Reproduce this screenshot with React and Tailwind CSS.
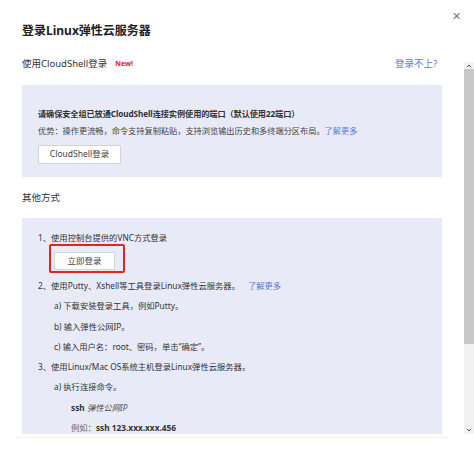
import React from "react";

const font = { fontFamily: '"Noto Sans", "Noto Sans CJK SC", sans-serif' };

const Row = ({ indent, children }) => (
  <div className={`${indent} leading-[20.3px] h-[20.3px] whitespace-nowrap`}>{children}</div>
);

const Chevron = ({ up }) => (
  <svg width="6" height="4" viewBox="0 0 6 4" className="text-[#555]">
    <path
      d={up ? "M0.8 3.2 L3 1 L5.2 3.2" : "M0.8 0.8 L3 3 L5.2 0.8"}
      fill="none"
      stroke="currentColor"
      strokeWidth="1"
    />
  </svg>
);

const App = () => {
  return (
    <div
      className="relative w-[474px] h-[474px] bg-white overflow-hidden text-[#333]"
      style={font}
    >
      {/* close */}
      <div className="absolute left-[452px] top-[10px] text-[#777] text-[11px] leading-[12px]">
        ✕
      </div>

      <div className="pl-[22px] pt-[22px] h-[54px]">
        <h1 className="text-[12px] leading-[18px] font-bold text-[#222] whitespace-nowrap">
          登录Linux弹性云服务器
        </h1>
      </div>

      <div className="flex">
        <div className="ml-[22px] w-[420px] h-[380px] overflow-hidden">
          <div className="flex items-center h-[20px] text-[9.5px]">
            <span>使用CloudShell登录</span>
            <span className="ml-[8px] text-[7px] font-bold text-[#e02020]">New!</span>
            <span className="ml-auto mr-[5px] text-[#5a78d6]">登录不上?</span>
          </div>

          <div className="mt-[11px] bg-[#e8ebf7] h-[92px] pl-[16px] pt-[20px] text-[8.2px]">
            <div className="leading-[17px] font-bold whitespace-nowrap tracking-[-0.1px]">
              请确保安全组已放通CloudShell连接实例使用的端口（默认使用22端口）
            </div>
            <div className="leading-[17px] whitespace-nowrap text-[#444]">
              优势：操作更流畅，命令支持复制粘贴，支持浏览输出历史和多终端分区布局。
              <span className="text-[#5a78d6]">了解更多</span>
            </div>
            <button className="mt-[6px] w-[83px] h-[19px] bg-white border border-[#d4d4d4] rounded-[2px] text-[8.5px] text-[#444]">
              CloudShell登录
            </button>
          </div>

          <div className="mt-[11px] h-[20px] leading-[20px] text-[9.5px]">其他方式</div>

          <div className="mt-[10px] bg-[#e8ebf7] pl-[16px] pt-[14px] text-[8.3px] text-[#333] h-[240px]">
            <div className="leading-[12px] whitespace-nowrap">1、使用控制台提供的VNC方式登录</div>
            <div className="ml-[11px] w-[76px] h-[29px] border-2 border-[#e0261c] rounded-[2px] pl-[3px] pt-[6px]">
              <button className="w-[61px] h-[18px] bg-white border border-[#d4d4d4] text-[8.5px] text-[#444]">
                立即登录
              </button>
            </div>
            <div className="mt-[3px]">
              <Row indent="">
                2、使用Putty、Xshell等工具登录Linux弹性云服务器。
                <span className="ml-[8px] text-[#5a78d6]">了解更多</span>
              </Row>
              <Row indent="pl-[16px]">a) 下载安装登录工具，例如Putty。</Row>
              <Row indent="pl-[16px]">b) 输入弹性公网IP。</Row>
              <Row indent="pl-[16px]">c) 输入用户名：root、密码，单击“确定”。</Row>
              <Row indent="">3、使用Linux/Mac OS系统主机登录Linux弹性云服务器。</Row>
              <Row indent="pl-[16px]">a) 执行连接命令。</Row>
              <Row indent="pl-[33px]">
                <span className="font-bold">ssh</span> <span className="italic text-[#555]">弹性公网IP</span>
              </Row>
              <Row indent="pl-[33px]">
                <span className="text-[#666]">例如：</span>
                <span className="font-bold">ssh 123.xxx.xxx.456</span>
              </Row>
            </div>
          </div>
        </div>

        {/* scrollbar */}
        <div className="ml-auto mt-[8px] w-[10px] h-[372px] bg-[#f1f1f1] flex flex-col items-center">
          <div className="h-[7px] flex items-center justify-center">
            <Chevron up />
          </div>
          <div className="w-[10px] h-[275px] bg-[#c8c8c8]" />
          <div className="mt-auto h-[9px] flex items-center justify-center">
            <Chevron />
          </div>
        </div>
      </div>

      <div className="ml-[15px] mt-[3px] w-[432px] border-t border-[#f2f2f2]" />
    </div>
  );
};

export default App;
